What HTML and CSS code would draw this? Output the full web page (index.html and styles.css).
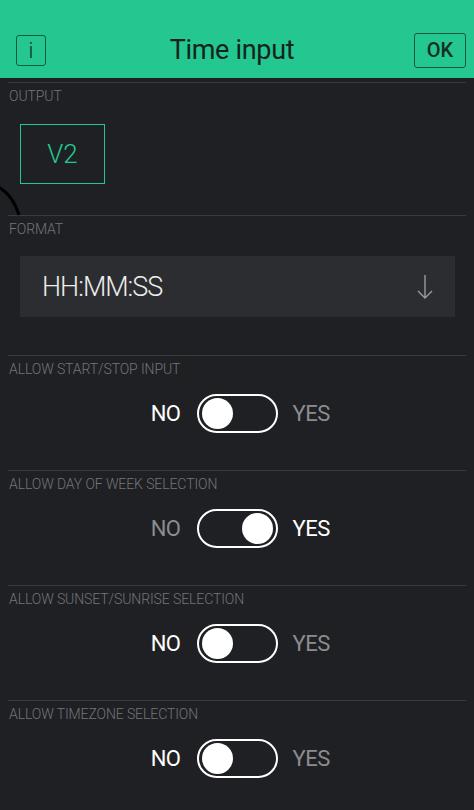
FILE: index.html
```html
<!DOCTYPE html>
<html lang="en">
<head>
  <meta charset="UTF-8" />
  <meta name="viewport" content="width=device-width, initial-scale=1.0"/>
  <title>Time input</title>
  <link rel="stylesheet" href="styles.css">
</head>
<body>
  <header class="top-bar">
    <button class="bar-btn btn-info">i</button>
    <h1 class="bar-title">Time input</h1>
    <button class="bar-btn btn-ok">OK</button>
  </header>

  <!-- stray arc from the screenshot -->
  <svg class="stray-arc" viewBox="0 0 24 32"><path d="M-2 2Q12 9 19 30"/></svg>

  <section class="group group-output">
    <div class="group-label">OUTPUT</div>
    <div class="pin-box">V2</div>
  </section>

  <section class="group group-format">
    <div class="group-label">FORMAT</div>
    <div class="select">
      <span class="select-value">HH:MM:SS</span>
      <svg class="select-arrow" viewBox="0 0 16 26"><path d="M8 1V24M1 17L8 24L15 17"/></svg>
    </div>
  </section>

  <section class="group group-toggle">
    <div class="group-label">ALLOW START/STOP INPUT</div>
    <div class="toggle-row">
      <span class="opt opt-no active">NO</span>
      <span class="switch"><span class="knob"></span></span>
      <span class="opt opt-yes">YES</span>
    </div>
  </section>

  <section class="group group-toggle">
    <div class="group-label">ALLOW DAY OF WEEK SELECTION</div>
    <div class="toggle-row">
      <span class="opt opt-no">NO</span>
      <span class="switch on"><span class="knob"></span></span>
      <span class="opt opt-yes active">YES</span>
    </div>
  </section>

  <section class="group group-toggle">
    <div class="group-label">ALLOW SUNSET/SUNRISE SELECTION</div>
    <div class="toggle-row">
      <span class="opt opt-no active">NO</span>
      <span class="switch"><span class="knob"></span></span>
      <span class="opt opt-yes">YES</span>
    </div>
  </section>

  <section class="group group-toggle">
    <div class="group-label">ALLOW TIMEZONE SELECTION</div>
    <div class="toggle-row">
      <span class="opt opt-no active">NO</span>
      <span class="switch"><span class="knob"></span></span>
      <span class="opt opt-yes">YES</span>
    </div>
  </section>
</body>
</html>
```

FILE: styles.css
```css
:root {
  --green:      #24c78f;
  --green-dark: #0f5a3e;
  --bg:         #1f2024;
  --field:      #2c2d31;
  --line:       #393a3e;
  --label:      #74757a;
  --muted:      #8b8c90;
  --white:      #fff;
}

* { box-sizing: border-box; margin: 0; padding: 0; }

body {
  position: relative;
  min-height: 810px;
  background: var(--bg);
  font-family: Roboto, "Liberation Sans", sans-serif;
  overflow: hidden;
}

.top-bar {
  height: 78px;
  padding: 22px 8px 0 16px;
  background: var(--green);
  display: flex;
  align-items: center;
  justify-content: space-between;
}

.bar-title {
  font-size: 27px;
  font-weight: 400;
  color: #14241d;
  letter-spacing: -0.3px;
  margin-left: 4px;
}

.bar-btn {
  background: transparent;
  border: 1.5px solid var(--green-dark);
  border-radius: 3px;
  color: #123026;
  font-family: inherit;
}
.btn-info {
  width: 30px; height: 31px;
  font-size: 22px;
  font-weight: 300;
}
.btn-ok {
  width: 52px; height: 35px;
  font-size: 20px;
  font-weight: 500;
}

.stray-arc {
  position: absolute;
  left: 0; top: 185px;
  width: 24px; height: 32px;
  fill: none;
  stroke: #000;
  stroke-width: 3;
}

.group {
  margin: 0 8px;
  border-top: 1px solid var(--line);
}
.group-output { margin-top: 4px; padding: 0 0 31px; }
.group-format { padding: 0 0 38px; }
.group-toggle { padding: 0 0 37px; }

.group-label {
  padding: 5px 0 0 1px;
  font-size: 14px;
  font-weight: 300;
  line-height: 16px;
  color: var(--label);
  letter-spacing: -0.1px;
}

.pin-box {
  width: 85px; height: 60px;
  margin: 20px 0 0 12px;
  border: 1.5px solid var(--green);
  color: var(--green);
  font-size: 26px;
  font-weight: 300;
  display: flex;
  align-items: center;
  justify-content: center;
}

.select {
  height: 61px;
  margin: 19px 11px 0 12px;
  padding: 0 22px;
  background: var(--field);
  display: flex;
  align-items: center;
  justify-content: space-between;
}
.select-value {
  font-size: 27px;
  font-weight: 300;
  color: #ececec;
  letter-spacing: -1px;
}
.select-arrow {
  width: 16px; height: 26px;
  fill: none;
  stroke: #9a9b9f;
  stroke-width: 1.4;
}

.toggle-row {
  margin-top: 17px;
  display: grid;
  grid-template-columns: 1fr auto 1fr;
  align-items: center;
}
.opt {
  font-size: 22px;
  color: var(--muted);
  letter-spacing: -0.5px;
}
.opt.active { color: var(--white); }
.opt-no  { justify-self: end; margin-right: 16px; }
.opt-yes { justify-self: start; margin-left: 15px; }

.switch {
  width: 81px; height: 39px;
  padding: 2px 3px;
  border: 2.5px solid var(--white);
  border-radius: 20px;
  display: flex;
  align-items: center;
}
.switch.on { justify-content: flex-end; }
.knob {
  width: 31px; height: 31px;
  border-radius: 50%;
  background: var(--white);
}
```
